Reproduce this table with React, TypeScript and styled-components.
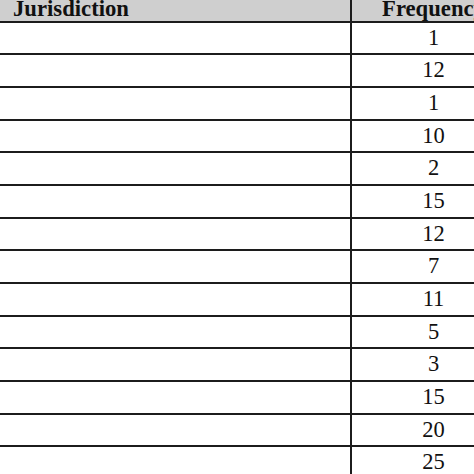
import React from "react";
import styled, { createGlobalStyle } from "styled-components";

const Global = createGlobalStyle`
  html, body { margin: 0; padding: 0; background: #ffffff; overflow: hidden; }
  body { width: 474px; height: 474px; }
`;

const Table = styled.div`
  width: 520px;
  font-family: "Liberation Serif", "Times New Roman", serif;
  color: #111111;
`;

const Row = styled.div<{ $header?: boolean }>`
  display: grid;
  grid-template-columns: 352px 163px;
  border-bottom: 2px solid #1c1c1c;
  background: ${(p) => (p.$header ? "#cfcfcf" : "#ffffff")};
  height: ${(p) => (p.$header ? "20.67px" : "30.67px")};
  box-sizing: content-box;
`;

const NameCell = styled.div<{ $header?: boolean }>`
  border-right: 2px solid #1c1c1c;
  padding-left: 13px;
  font-weight: ${(p) => (p.$header ? 700 : 400)};
  font-size: ${(p) => (p.$header ? "22.7px" : "22.5px")};
  line-height: ${(p) => (p.$header ? "18px" : "29.4px")};
  overflow: hidden;
  white-space: nowrap;
`;

const ValueCell = styled.div<{ $header?: boolean }>`
  text-align: center;
  font-weight: ${(p) => (p.$header ? 700 : 400)};
  font-size: ${(p) => (p.$header ? "22.7px" : "22.5px")};
  line-height: ${(p) => (p.$header ? "18px" : "29.4px")};
  white-space: nowrap;
`;

const values = [1, 12, 1, 10, 2, 15, 12, 7, 11, 5, 3, 15, 20, 25];

export default function App() {
  return (
    <>
      <Global />
      <Table>
        <Row $header>
          <NameCell $header>Jurisdiction</NameCell>
          <ValueCell $header>Frequency</ValueCell>
        </Row>
        {values.map((v, i) => (
          <Row key={i}>
            <NameCell />
            <ValueCell>{v}</ValueCell>
          </Row>
        ))}
      </Table>
    </>
  );
}
